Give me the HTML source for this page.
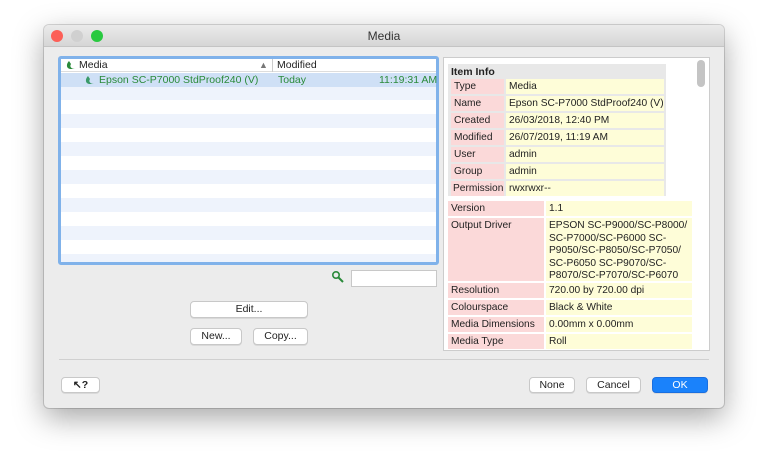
<html><head><style>
body{margin:0;width:768px;height:472px;background:#fff;font-family:"Liberation Sans",sans-serif;font-size:10.5px;color:#222;position:relative;overflow:hidden}
.a{position:absolute;box-sizing:border-box;white-space:nowrap}
.win{left:44px;top:25px;width:680px;height:383px;background:#ececec;border-radius:5px;box-shadow:0 10px 30px rgba(0,0,0,.35),0 0 0 1px rgba(0,0,0,.15);overflow:hidden}
.title{left:0;top:0;width:680px;height:22px;background:linear-gradient(#ebebeb,#d6d6d6);border-bottom:1px solid #c4c4c4;text-align:center;line-height:22px;font-size:12px;color:#333}
.dot{width:12px;height:12px;border-radius:6px;top:5px}
.btn{background:#fff;border:1px solid #c8c8c8;border-radius:4px;text-align:center;line-height:15px;box-shadow:0 1px 0 rgba(0,0,0,.08)}
.g{display:grid;gap:2px 2px;font-size:10.2px}
.g div{overflow:hidden;white-space:nowrap;line-height:15px;padding-left:3px}
.lab{background:#fbd9d9}
.val{background:#fefdd8}
</style></head><body>
<div class="a win">
<div class="a title">Media</div>
<div class="a dot" style="left:7px;background:#fc5f57"></div>
<div class="a dot" style="left:27px;background:#d0d0d0"></div>
<div class="a dot" style="left:47px;background:#29c940"></div>
</div>
<!-- list -->
<div class="a" style="left:58px;top:56px;width:381px;height:209px;border:3px solid #80b2ea;border-radius:3px;background:repeating-linear-gradient(#fff 0 14px,#eef3fc 14px 28px);background-position:0 13px"></div>
<div class="a" style="left:61px;top:59px;width:375px;height:13px;background:#fff;border-bottom:1px solid #ddd"></div>
<svg class="a" style="left:66px;top:61px" width="9" height="9"><path d="M3 0 C0 3 0 8 5 8 L9 8 C6 8 3 6 5 3 Z" fill="#2a8a3a"/></svg>
<div class="a" style="left:79px;top:59px;line-height:13px">Media</div>
<div class="a" style="left:259px;top:59px;line-height:13px;color:#777;font-size:9px">▲</div>
<div class="a" style="left:272px;top:59px;width:1px;height:13px;background:#ccc"></div>
<div class="a" style="left:277px;top:59px;line-height:13px">Modified</div>
<div class="a" style="left:61px;top:73px;width:375px;height:14px;background:#cfe0f6"></div>
<svg class="a" style="left:85px;top:76px" width="9" height="9"><path d="M3 0 C0 3 0 8 5 8 L9 8 C6 8 3 6 5 3 Z" fill="#3a9a6a"/></svg>
<div class="a" style="left:99px;top:73px;line-height:14px;color:#2a8a3a">Epson SC-P7000 StdProof240 (V)</div>
<div class="a" style="left:278px;top:73px;line-height:14px;color:#2a8a3a">Today</div>
<div class="a" style="left:379px;top:73px;line-height:14px;color:#2a8a3a">11:19:31 AM</div>
<!-- search -->
<svg class="a" style="left:331px;top:270px" width="14" height="14"><circle cx="5" cy="5" r="3.2" stroke="#2a8a3a" stroke-width="1.6" fill="none"/><path d="M7.5 7.5 L12 12" stroke="#2a8a3a" stroke-width="2"/></svg>
<div class="a" style="left:351px;top:270px;width:86px;height:17px;background:#fff;border:1px solid #c8c8c8"></div>
<div class="a btn" style="left:190px;top:301px;width:118px;height:17px">Edit...</div>
<div class="a btn" style="left:190px;top:328px;width:52px;height:17px">New...</div>
<div class="a btn" style="left:253px;top:328px;width:55px;height:17px">Copy...</div>
<!-- right panel -->
<div class="a" style="left:443px;top:57px;width:267px;height:294px;background:#fff;border:1px solid #ccc"></div>
<div class="a" style="left:697px;top:60px;width:8px;height:27px;background:#c4c4c4;border-radius:4px"></div>
<div class="a" style="left:448px;top:64px;width:218px;height:132px;background:#e8e8e8"></div>
<div class="a" style="left:451px;top:66px;font-weight:bold;line-height:13px">Item Info</div>
<div class="a g" style="left:451px;top:79px;grid-template-columns:53px 158px;grid-auto-rows:15px">
<div class="lab">Type</div><div class="val">Media</div>
<div class="lab">Name</div><div class="val">Epson SC-P7000 StdProof240 (V)</div>
<div class="lab">Created</div><div class="val">26/03/2018, 12:40 PM</div>
<div class="lab">Modified</div><div class="val">26/07/2019, 11:19 AM</div>
<div class="lab">User</div><div class="val">admin</div>
<div class="lab">Group</div><div class="val">admin</div>
<div class="lab" style="padding-left:2px">Permission</div><div class="val">rwxrwxr--</div>
</div>
<div class="a g" style="left:448px;top:201px;grid-template-columns:96px 146px;grid-template-rows:15px 63px 15px 15px 15px 15px">
<div class="lab">Version</div><div class="val">1.1</div>
<div class="lab">Output Driver</div><div class="val" style="line-height:12.5px;padding-top:2px">EPSON SC-P9000/SC-P8000/<br>SC-P7000/SC-P6000 SC-<br>P9050/SC-P8050/SC-P7050/<br>SC-P6050 SC-P9070/SC-<br>P8070/SC-P7070/SC-P6070</div>
<div class="lab">Resolution</div><div class="val">720.00 by 720.00 dpi</div>
<div class="lab">Colourspace</div><div class="val">Black &amp; White</div>
<div class="lab">Media Dimensions</div><div class="val">0.00mm x 0.00mm</div>
<div class="lab">Media Type</div><div class="val">Roll</div>
</div>
<div class="a" style="left:59px;top:359px;width:650px;height:1px;background:#d0d0d0"></div>
<div class="a btn" style="left:61px;top:377px;width:39px;height:16px;font-weight:bold">↖?</div>
<div class="a btn" style="left:529px;top:377px;width:46px;height:16px">None</div>
<div class="a btn" style="left:586px;top:377px;width:55px;height:16px">Cancel</div>
<div class="a btn" style="left:652px;top:377px;width:56px;height:16px;background:#1a82fb;border-color:#1a6fe0;color:#fff">OK</div>
</body></html>
